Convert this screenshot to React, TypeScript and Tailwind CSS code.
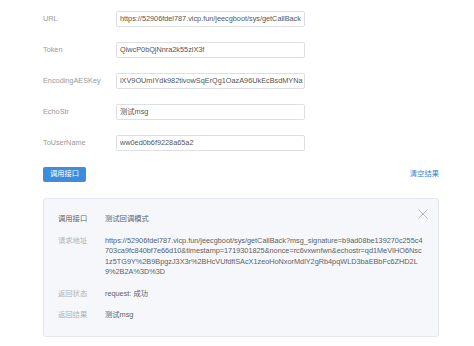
import React from "react";

const fields: { label: string; value: string }[] = [
  { label: "URL", value: "https://52906fdel787.vicp.fun/jeecgboot/sys/getCallBack" },
  { label: "Token", value: "QlwcP0bQjNnra2k55zlX3f" },
  { label: "EncodingAESKey", value: "iXV9OUmIYdk982tivowSqErQg1OazA96UkEcBsdMYNa" },
  { label: "EchoStr", value: "测试msg" },
  { label: "ToUserName", value: "ww0ed0b6f9228a65a2" },
];

const urlLines = [
  "https://52906fdel787.vicp.fun/jeecgboot/sys/getCallBack?msg_signature=b9ad08be139270c255c4",
  "703ca9fc840bf7e66d10&timestamp=1719301825&nonce=rc6vxwnfwn&echostr=qd1MeVIHO6Nsc",
  "1z5TG9Y%2B9BpgzJ3X3r%2BHcVUfdflSAcX1zeoHoNxorMdlY2gRb4pqWLD3baEBbFc6ZHD2L",
  "9%2B2A%3D%3D",
];

export default function App() {
  return (
    <div
      className="w-[474px] h-[346px] bg-white overflow-hidden text-[7.3px]"
      style={{ fontFamily: '"Liberation Sans", Arial, "Noto Sans CJK SC", sans-serif' }}
    >
      <div className="ml-[43px] w-[397px] pt-[11px]">
        {/* Form */}
        <div className="flex flex-col gap-[15px]">
          {fields.map((f) => (
            <div key={f.label} className="flex items-center h-[16px]">
              <label className="w-[73px] text-[#999]">{f.label}</label>
              <div className="w-[189px] h-[16px] border border-[#dcdfe6] rounded-[2px] px-[3px] flex items-center text-[#555] overflow-hidden whitespace-nowrap">
                {f.value}
              </div>
            </div>
          ))}
        </div>

        {/* Actions */}
        <div className="flex items-center justify-between mt-[16px]">
          <button className="w-[43px] h-[15px] bg-[#3d8ddb] text-white rounded-[2px] text-[7.3px] flex items-center justify-center">
            调用接口
          </button>
          <span className="text-[#3a86d0] mr-[1px]">清空结果</span>
        </div>

        {/* Result */}
        <div className="relative mt-[16px] w-[396px] bg-[#f5f7fa] border border-[#e4e7ed] rounded-[3px] pl-[14px] pr-[12px] pt-[15px] pb-[15px] leading-[10.5px]">
          <button className="absolute right-[10px] top-[10px] text-[#b0b3b8]">
            <svg width="10" height="10" viewBox="0 0 10 10" fill="none" stroke="currentColor" strokeWidth="0.9">
              <path d="M0.5 0.5L9.5 9.5M9.5 0.5L0.5 9.5" />
            </svg>
          </button>
          <div className="flex flex-col gap-[11px]">
            <div className="flex">
              <span className="w-[47px] text-[#606266]">调用接口</span>
              <span className="text-[#606266]">测试回调模式</span>
            </div>
            <div className="flex">
              <span className="w-[47px] shrink-0 text-[#b0b3b8]">请求地址</span>
              <div className="text-[#606266] whitespace-nowrap">
                {urlLines.map((l) => (
                  <div key={l}>{l}</div>
                ))}
              </div>
            </div>
            <div className="flex">
              <span className="w-[47px] text-[#b0b3b8]">返回状态</span>
              <span className="text-[#606266]">request: 成功</span>
            </div>
            <div className="flex">
              <span className="w-[47px] text-[#b0b3b8]">返回结果</span>
              <span className="text-[#606266]">测试msg</span>
            </div>
          </div>
        </div>
      </div>
    </div>
  );
}
